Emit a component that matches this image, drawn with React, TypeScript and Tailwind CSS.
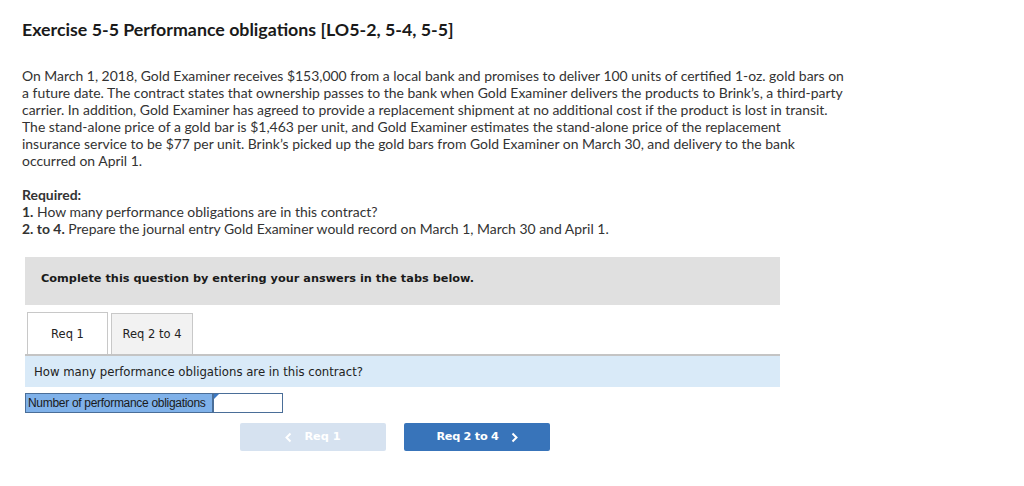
export default function App() {
  const para = [
    'On March 1, 2018, Gold Examiner receives $153,000 from a local bank and promises to deliver 100 units of certified 1-oz. gold bars on',
    'a future date. The contract states that ownership passes to the bank when Gold Examiner delivers the products to Brink\u2019s, a third-party',
    'carrier. In addition, Gold Examiner has agreed to provide a replacement shipment at no additional cost if the product is lost in transit.',
    'The stand-alone price of a gold bar is $1,463 per unit, and Gold Examiner estimates the stand-alone price of the replacement',
    'insurance service to be $77 per unit. Brink\u2019s picked up the gold bars from Gold Examiner on March 30, and delivery to the bank',
    'occurred on April 1.',
  ];

  return (
    <div className="w-[1024px] h-[486px] bg-white text-[#222] overflow-hidden">
      <div className="pl-[22px] pt-[18px]">
        <h1 className="font-['Lato',sans-serif] font-bold text-[17.8px] leading-[22px] text-[#1a1a1a]">
          Exercise 5-5 Performance obligations [LO5-2, 5-4, 5-5]
        </h1>

        <div className="mt-[27px] font-['Lato',sans-serif] text-[13.95px] leading-[17px] text-[#333]">
          {para.map((l) => (
            <div key={l} className="whitespace-nowrap">{l}</div>
          ))}
          <div className="mt-[17px] font-bold">Required:</div>
          <div><span className="font-bold">1.</span> How many performance obligations are in this contract?</div>
          <div><span className="font-bold">2. to 4.</span> Prepare the journal entry Gold Examiner would record on March 1, March 30 and April 1.</div>
        </div>
      </div>

      <div className="ml-[25px] mt-[20px] w-[755px] font-['DejaVu_Sans','Verdana',sans-serif]">
        <div className="h-[48px] bg-[#e0e0e0] flex items-center pl-[16px] pb-[4px] text-[11.3px] font-bold text-[#1a1a1a]">
          Complete this question by entering your answers in the tabs below.
        </div>

        <div className="flex gap-[3px] pl-[2px] mt-[7px] h-[42px] items-end">
          <div className="w-[81px] h-[42px] border border-b-0 border-[#c8c8c8] bg-white flex items-center justify-center pt-[2px] text-[11.5px] text-[#222]">
            Req 1
          </div>
          <div className="w-[82px] h-[41px] border border-b-0 border-[#c8c8c8] bg-[#f2f2f2] flex items-center justify-center pt-[1px] text-[11.5px] text-[#222]">
            Req 2 to 4
          </div>
        </div>

        <div className="h-[33px] bg-[#d9eaf8] border-t-2 border-[#c4c4c4] flex items-center pl-[9px] pt-[2px] text-[11.7px] text-[#222]">
          How many performance obligations are in this contract?
        </div>

        <div className="flex mt-[6px] h-[20px]">
          <div className="w-[188px] h-[20px] bg-[#7fb1e9] border border-[#4a6e98] flex items-center pl-[2px] font-['Liberation_Sans',Arial,sans-serif] text-[12px] text-[#1a1a1a] tracking-[-0.3px]">
            Number of performance obligations
          </div>
          <div className="relative w-[70px] h-[20px] bg-white border border-[#4a6e98]">
            <span className="absolute left-0 top-0 w-0 h-0 border-t-[5px] border-r-[5px] border-t-[#3b78c4] border-r-transparent" />
          </div>
        </div>

        <div className="flex gap-[18px] ml-[215px] mt-[10px]">
          <div className="w-[146px] h-[28px] bg-[#d6e2f0] rounded-[2px] flex items-center justify-center gap-[12px] text-white text-[11.3px] font-bold">
            <svg width="7" height="11" viewBox="0 0 7 11" fill="none"><path d="M5.5 1.5L1.5 5.5L5.5 9.5" stroke="white" strokeWidth="2" /></svg>
            <span>Req 1</span>
          </div>
          <div className="w-[146px] h-[28px] bg-[#3874ba] rounded-[2px] flex items-center justify-center gap-[12px] text-white text-[11.3px] font-bold tracking-[-0.3px]">
            <span>Req 2 to 4</span>
            <svg width="7" height="11" viewBox="0 0 7 11" fill="none"><path d="M1.5 1.5L5.5 5.5L1.5 9.5" stroke="white" strokeWidth="2" /></svg>
          </div>
        </div>
      </div>
    </div>
  );
}
